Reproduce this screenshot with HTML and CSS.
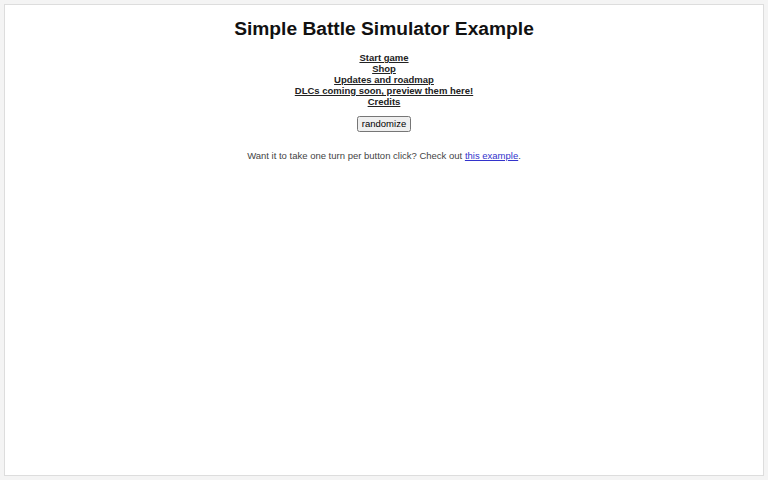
FILE: index.html
```html
<!DOCTYPE html>
<html lang="en">
<head>
    <meta charset="UTF-8">
    <title>Simple Battle Simulator Example</title>
    <link rel="stylesheet" href="styles.css">
</head>
<body>

    <div class="container">
        <h1>Simple Battle Simulator Example</h1>

        <nav class="menu">
            <a href="#">Start game</a>
            <a href="#">Shop</a>
            <a href="#">Updates and roadmap</a>
            <a href="#">DLCs coming soon, preview them here!</a>
            <a href="#">Credits</a>
        </nav>

        <button class="randomize">randomize</button>

        <p class="note">Want it to take one turn per button click? Check out <a href="#">this example</a>.</p>
    </div>

</body>
</html>
```

FILE: styles.css
```css
html, body {
    height: 100%;
}
body {
    font-family: "Liberation Sans", Arial, sans-serif;
    background-color: #f4f4f4;
    margin: 0;
    padding: 4px;
    box-sizing: border-box;
}
.container {
    height: 100%;
    box-sizing: border-box;
    background-color: #ffffff;
    border: 1px solid #dddddd;
    text-align: center;
    padding-top: 13px;
}
h1 {
    font-size: 19.2px;
    line-height: 22px;
    margin: 0 0 12px;
    color: #111111;
}
.menu {
    display: flex;
    flex-direction: column;
    align-items: center;
    font-size: 9.5px;
    line-height: 11px;
}
.menu a {
    color: #222222;
    font-weight: bold;
}
.randomize {
    margin-top: 9px;
    font-family: "Liberation Sans", Arial, sans-serif;
    font-size: 9.5px;
    line-height: 12px;
    padding: 0 3px;
}
.note {
    font-size: 9.5px;
    color: #444444;
    margin-top: 18px;
}
.note a {
    color: #3333cc;
}
```
